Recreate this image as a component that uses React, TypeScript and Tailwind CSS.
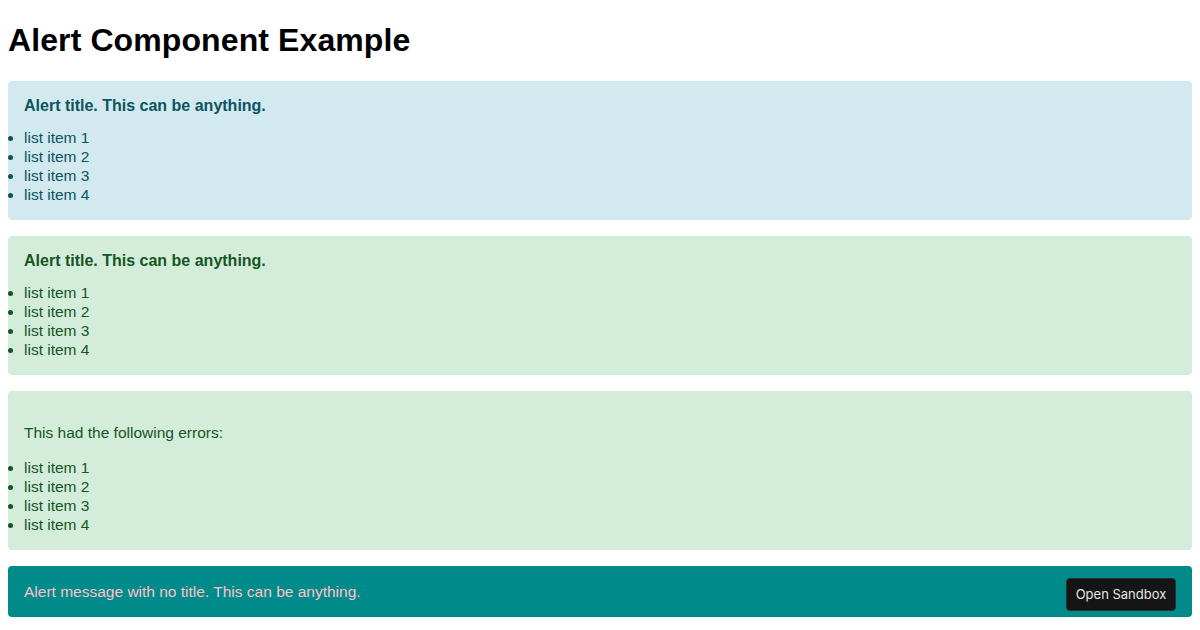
const items = ["list item 1", "list item 2", "list item 3", "list item 4"];

function ItemList({ className }: { className?: string }) {
  return (
    <ul className={`list-disc pl-0 text-[15.5px] leading-[19px] ${className ?? ""}`}>
      {items.map((item) => (
        <li key={item}>{item}</li>
      ))}
    </ul>
  );
}

export default function App() {
  return (
    <div className="min-h-[630px] bg-white px-2 font-['Liberation_Sans',Arial,sans-serif] text-base">
      <h1 className="mt-[22px] mb-[22px] text-[32px] font-bold leading-[37px] tracking-[0.1px] text-black">
        Alert Component Example
      </h1>

      <div className="mb-4 rounded bg-[#d1e9ef] px-4 pt-[17px] pb-4 text-[#0c5460]">
        <div className="font-bold leading-4">Alert title. This can be anything.</div>
        <ItemList className="mt-[14px]" />
      </div>

      <div className="mb-4 rounded bg-[#d4ecda] px-4 pt-[17px] pb-4 text-[#155724]">
        <div className="font-bold leading-4">Alert title. This can be anything.</div>
        <ItemList className="mt-[14px]" />
      </div>

      <div className="mb-4 rounded bg-[#d4ecda] px-4 pt-4 pb-4 text-[#155724]">
        <p className="my-4 text-[15.5px] leading-[19px]">This had the following errors:</p>
        <ItemList />
      </div>

      <div className="rounded bg-[#008b8b] px-4 py-4 text-[15.5px] leading-[19px] text-[#ffc0cb]">
        Alert message with no title. This can be anything.
      </div>

      <button
        type="button"
        className="fixed right-[24px] bottom-[19px] h-[33px] w-[110px] rounded border border-[#2e2e2e] bg-[#151515] text-[13px] text-[#e6e6e6] font-['Inter',sans-serif]"
      >
        Open Sandbox
      </button>
    </div>
  );
}
